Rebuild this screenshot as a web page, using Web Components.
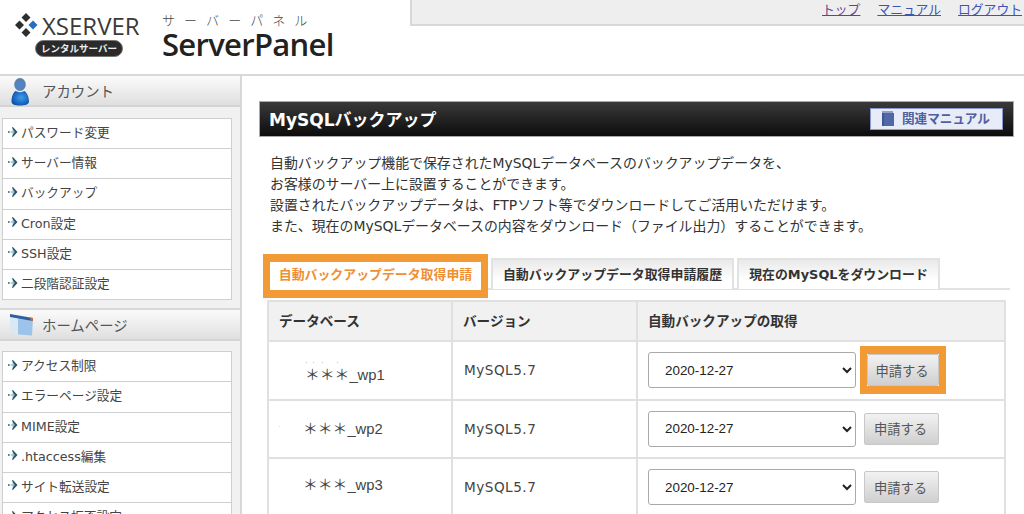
<!DOCTYPE html>
<html lang="ja">
<head>
<meta charset="utf-8">
<title>MySQLバックアップ</title>
<style>
  html, body { margin: 0; height: 514px; overflow: hidden; background: #fff; }
  body { font: 13.6px "DejaVu Sans", "Noto Sans CJK JP", sans-serif; color: #333; }
  .page { display: flex; align-items: stretch; height: 438px; }
</style>
</head>
<body>
<xs-header></xs-header>
<div class="page">
  <xs-sidebar>
    <xs-menu title="アカウント" icon="user" items="パスワード変更|サーバー情報|バックアップ|Cron設定|SSH設定|二段階認証設定"></xs-menu>
    <xs-menu title="ホームページ" icon="window" items="アクセス制限|エラーページ設定|MIME設定|.htaccess編集|サイト転送設定|アクセス拒否設定"></xs-menu>
  </xs-sidebar>
  <xs-main>
    <xs-title-bar>MySQLバックアップ</xs-title-bar>
    <xs-intro>
      自動バックアップ機能で保存されたMySQLデータベースのバックアップデータを、<br>
      お客様のサーバー上に設置することができます。<br>
      設置されたバックアップデータは、FTPソフト等でダウンロードしてご活用いただけます。<br>
      また、現在のMySQLデータベースの内容をダウンロード（ファイル出力）することができます。
    </xs-intro>
    <xs-tabs></xs-tabs>
    <xs-backup-table></xs-backup-table>
  </xs-main>
</div>

<script>
class XsHeader extends HTMLElement {
  constructor() {
    super();
    this.attachShadow({ mode: "open" });
  }
  connectedCallback() {
    this.shadowRoot.innerHTML = `
      <style>
        :host { display: flex; height: 76px; box-sizing: border-box; border-bottom: 2px solid #d8d8d8; }
        .logo { width: 153px; padding: 12px 0 0 15px; box-sizing: border-box; flex: none; display: flex; flex-direction: column; }
        .brand { display: flex; align-items: center; height: 26px; }
        .brand svg { flex: none; margin-right: 4px; }
        .brand span { font: 400 24px "Open Sans", sans-serif; color: #3a3a3a; white-space: nowrap; }
        .pill { align-self: flex-start; margin: 2px 0 0 20px; width: 88px; height: 17px; border-radius: 9px; background: #2b2b2b; border: 1px solid #777; box-sizing: border-box;
          color: #eee; font: 700 9.5px/15px "Noto Sans CJK JP", sans-serif; text-align: center; white-space: nowrap; }
        .panel { width: 257px; flex: none; padding: 12px 0 0 9px; box-sizing: border-box; color: #222; }
        .panel small { display: block; font: 300 13px/16px "Noto Sans CJK JP", sans-serif; letter-spacing: 9.1px; color: #444; white-space: nowrap; }
        .panel b { display: block; font: 600 31px/30px "Open Sans", sans-serif; letter-spacing: -.7px; margin-top: 1px; white-space: nowrap; }
        .top { flex: 1; height: 26px; box-sizing: border-box; background: #eee; border-left: 2px solid #d8d8d8; border-bottom: 2px solid #d8d8d8;
          display: flex; justify-content: flex-end; gap: 17px; padding-right: 2px; font: 12.8px/18px "Noto Sans CJK JP", sans-serif; }
        a { color: #3b55b5; text-decoration: underline; }
        a.seen { color: #6a3f90; }
      </style>
      <div class="logo">
        <div class="brand">
          <svg width="23" height="26" viewBox="0 0 23 26">
            <path fill="#2e2e2e" d="M11 1l4.500 4.500L11 10 6.500 5.500zM4.500 8.500L9 13l-4.500 4.500L0 13zM11 16l4.500 4.500L11 25l-4.500-4.500z"/>
            <path fill="#2a6cc0" d="M18 8.500l4.500 4.500-4.500 4.500-4.500-4.500z"/>
          </svg>
          <span>XSERVER</span>
        </div>
        <div class="pill">レンタルサーバー</div>
      </div>
      <div class="panel">
        <small>サーバーパネル</small>
        <b>ServerPanel</b>
      </div>
      <div class="top">
        <a class="seen" href="#">トップ</a><a href="#">マニュアル</a><a href="#">ログアウト</a>
      </div>`;
  }
}

class XsSidebar extends HTMLElement {
  constructor() {
    super();
    this.attachShadow({ mode: "open" });
    this.shadowRoot.innerHTML = `
      <style>
        :host { display: block; width: 242px; flex: none; box-sizing: border-box; background: #f1f1f1; border-right: 2px solid #d8d8d8; overflow: hidden; }
      </style>
      <slot></slot>`;
  }
}

const MENU_ICONS = {
  user: `<svg width="27" height="30" viewBox="0 0 27 30">
      <defs>
        <radialGradient id="uh" cx=".5" cy=".6" r=".6"><stop offset="0" stop-color="#4f86d0"/><stop offset="1" stop-color="#5d7da8"/></radialGradient>
        <radialGradient id="ub" cx=".55" cy=".45" r=".6"><stop offset="0" stop-color="#3d9df0"/><stop offset="1" stop-color="#0f4fa8"/></radialGradient>
      </defs>
      <ellipse cx="11" cy="8.500" rx="5.800" ry="6.500" fill="url(#uh)"/>
      <path fill="url(#ub)" d="M6.500 15c2.500 1.500 6.500 1.500 9 0 2.500 1.500 4.500 6 4.500 10.500 0 3-4 4-9 4s-8.500-1-8.500-4C2.500 21 4 16.500 6.500 15z"/>
    </svg>`,
  window: `<svg width="27" height="30" viewBox="0 0 27 30">
      <path fill="#dbe8f4" d="M1 5l8 1.500V24.500L1 23z"/>
      <path fill="#9cc4ea" d="M9 6.500L24 9l-1 16.500-14-1z"/>
      <path fill="#2f5f9e" d="M1 4l23 4-.2 3L1 7z"/>
      <path fill="#d9683a" d="M21.500 7.600L24 8l-.2 3-2.300-.4z"/>
    </svg>`
};

class XsMenu extends HTMLElement {
  constructor() {
    super();
    this.attachShadow({ mode: "open" });
  }
  connectedCallback() {
    const items = (this.getAttribute("items") || "").split("|");
    const icon = MENU_ICONS[this.getAttribute("icon")] || "";
    this.shadowRoot.innerHTML = `
      <style>
        :host { display: block; border-bottom: 2px solid #d8d8d8; background: #f1f1f1; }
        :host(:last-child) { border-bottom: 0; }
        .head { height: 31px; box-sizing: border-box; display: flex; align-items: center; padding-left: 9px; gap: 6px;
          background: linear-gradient(#fbfbfb, #dfdfdf); border-bottom: 2px solid #d4d4d4; }
        .head .ic { width: 27px; height: 30px; display: flex; flex: none; }
        .head .t { font: 400 14.400px "Noto Sans CJK JP", sans-serif; color: #555; }
        ul { list-style: none; margin: 10px 8px 8px 2px; padding: 0; background: #fff; border-top: 1px solid #cfcfcf; border-left: 1px solid #cfcfcf; border-right: 1px solid #cfcfcf; }
        :host(:first-child) ul { margin-top: 11px; }
        li { height: 30.200px; box-sizing: border-box; border-bottom: 1px solid #cfcfcf; display: flex; align-items: center; padding: 0 0 4px 5px; color: #444; font-size: 12.700px; white-space: nowrap; }
        li svg { flex: none; margin-right: 3px; }
      </style>
      <div class="head"><span class="ic">${icon}</span><span class="t">${this.getAttribute("title")}</span></div>
      <ul>${items.map(t => `<li>
        <svg width="10" height="10" viewBox="0 0 10 10"><path fill="#27566b" d="M0 4.200h1.600v1.600H0zM4 .5l.9-.4L9.500 5 4.900 9.900 4 9.500 6 5z"/><path fill="#8fb0bd" d="M2.600 4.200h2v1.600h-2zM4.500 2L7 5 4.500 8z" opacity=".8"/></svg>${t}</li>`).join("")}</ul>`;
  }
}

class XsMain extends HTMLElement {
  constructor() {
    super();
    this.attachShadow({ mode: "open" });
    this.shadowRoot.innerHTML = `
      <style>
        :host { display: block; flex: 1; padding: 25px 10px 0 17px; min-width: 0; }
      </style>
      <slot></slot>`;
  }
}

class XsTitleBar extends HTMLElement {
  constructor() {
    super();
    this.attachShadow({ mode: "open" });
    this.shadowRoot.innerHTML = `
      <style>
        :host { display: flex; align-items: center; justify-content: space-between; height: 36px; box-sizing: border-box;
          background: linear-gradient(#3a3a3a, #0c0c0c); border: 1px solid #aaa; padding: 0 10px 0 9px; }
        h1 { margin: 0 0 1px; font: 700 17px "DejaVu Sans", "Noto Sans CJK JP", sans-serif; color: #fff; }
        a { display: flex; align-items: center; gap: 7px; width: 133px; height: 22px; box-sizing: border-box; padding: 0 0 2px 10px; margin-bottom: 1px;
          background: #e8ecf8; border: 1px solid #8a9ad0; color: #4d60a0; text-decoration: none; font: 700 12.600px "Noto Sans CJK JP", sans-serif; }
        a svg { margin-top: 2px; }
      </style>
      <h1><slot></slot></h1>
      <a href="#"><svg width="14" height="15" viewBox="0 0 14 15"><path fill="#8f9fc8" d="M1 0h11v2H1z"/><path fill="#5068a8" d="M1 2h12v13H1z"/><path fill="#3f5594" d="M1 2h2v13H1z"/></svg>関連マニュアル</a>`;
  }
}

class XsIntro extends HTMLElement {
  constructor() {
    super();
    this.attachShadow({ mode: "open" });
    this.shadowRoot.innerHTML = `
      <style>
        :host { display: block; margin: 16px 0 0 11px; font-size: 13.920px; line-height: 21px; color: #333; white-space: nowrap; }
      </style>
      <slot></slot>`;
  }
}

class XsTabs extends HTMLElement {
  constructor() {
    super();
    this.attachShadow({ mode: "open" });
  }
  connectedCallback() {
    this.shadowRoot.innerHTML = `
      <style>
        :host { display: flex; align-items: flex-end; height: 44px; margin: 17px 0 0 4px; gap: 3px; box-sizing: border-box; position: relative; }
        :host::after { content: ""; position: absolute; left: 220px; right: 4px; bottom: 8px; height: 2px; background: #e2e2e2; }
        .tab { height: 31px; margin-bottom: 9px; padding-bottom: 2px; box-sizing: border-box; display: flex; align-items: center; justify-content: center;
          border: 2px solid #e2e2e2; border-bottom: 0; background: linear-gradient(#e9e9e9, #fff 70%);
          font: 700 12.900px "DejaVu Sans", "Noto Sans CJK JP", sans-serif; color: #333; white-space: nowrap; position: relative; z-index: 1; }
        .on { height: 44px; width: 225px; margin: 0; padding: 0 0 5px; border: 7px solid #f29a35; border-top-width: 8px; border-bottom: 8px solid #f29a35; background: #fff; color: #ef8f34; }
        .b { width: 243px; }
        .c { width: 203px; }
      </style>
      <div class="tab on">自動バックアップデータ取得申請</div>
      <div class="tab b">自動バックアップデータ取得申請履歴</div>
      <div class="tab c">現在のMySQLをダウンロード</div>`;
  }
}

class XsBackupTable extends HTMLElement {
  constructor() {
    super();
    this.attachShadow({ mode: "open" });
  }
  connectedCallback() {
    const rows = [
      { name: "＊＊＊_wp1", cls: "r1", mark: true },
      { name: "＊＊＊_wp2", cls: "r2" },
      { name: "＊＊＊_wp3", cls: "r3" }
    ];
    this.shadowRoot.innerHTML = `
      <style>
        :host { display: block; margin: 2px 0 0 8px; width: 737px; }
        table { border-collapse: collapse; width: 737px; table-layout: fixed; }
        th, td { border: 2px solid #e0e0e0; text-align: left; padding: 0 10px; }
        th { height: 35px; padding-bottom: 3px; background: #f1f1f1; font-weight: 700; font-size: 13.600px; color: #333; }
        td { height: 56.500px; font-size: 13.600px; color: #444; letter-spacing: .5px; }
        td:nth-child(2) { padding-left: 11px; }
        .db { font-family: "Liberation Sans", "Noto Sans CJK JP", sans-serif; font-size: 14.800px; letter-spacing: 0; padding-left: 34px; }
        .db.r1 { height: 50.500px; padding-top: 6px; padding-left: 36px;
          background: linear-gradient(#c4c4c4, #c4c4c4) 37px 20px / 1px 1px no-repeat, linear-gradient(#c4c4c4, #c4c4c4) 44px 20px / 1px 1px no-repeat,
            linear-gradient(#c4c4c4, #c4c4c4) 53px 20px / 1px 1px no-repeat, linear-gradient(#c4c4c4, #c4c4c4) 68px 20px / 1px 1px no-repeat; }
        .db.r2 { height: 54.500px; padding-bottom: 2px; background: linear-gradient(#ddd, #ddd) 10px 25px / 1px 1px no-repeat; }
        .db.r3 { height: 49.500px; padding-bottom: 7px; }
        .sel { display: flex; align-items: center; gap: 8px; }
        select { width: 208px; height: 36px; padding-left: 12px; border: 1px solid #aaa; border-radius: 3px; background-color: #fff; color: #222;
          font: 13.400px "Liberation Sans", sans-serif; box-sizing: border-box; flex: none; }
        button { width: 75px; height: 32px; border: 1px solid #c8c8c8; border-radius: 2px; background: linear-gradient(#f2f2f2, #cfcfcf); color: #555;
          font: 13.300px "Noto Sans CJK JP", sans-serif; padding: 0 2px 0 0; box-sizing: border-box; flex: none; }
        .mark { display: flex; border: 7px solid #f29a35; border-width: 8px 7px; margin-left: -4px; flex: none; }
        .mark button { width: 72px; }
      </style>
      <table>
        <colgroup><col style="width:184px"><col style="width:185px"><col style="width:368px"></colgroup>
        <tr><th>データベース</th><th>バージョン</th><th>自動バックアップの取得</th></tr>
        ${rows.map(r => `<tr>
          <td class="db ${r.cls}">${r.name}</td>
          <td>MySQL5.7</td>
          <td><div class="sel"><select><option>2020-12-27</option></select>${r.mark ? `<span class="mark"><button>申請する</button></span>` : `<button>申請する</button>`}</div></td>
        </tr>`).join("")}
      </table>`;
  }
}

customElements.define("xs-header", XsHeader);
customElements.define("xs-sidebar", XsSidebar);
customElements.define("xs-menu", XsMenu);
customElements.define("xs-main", XsMain);
customElements.define("xs-title-bar", XsTitleBar);
customElements.define("xs-intro", XsIntro);
customElements.define("xs-tabs", XsTabs);
customElements.define("xs-backup-table", XsBackupTable);
</script>
</body>
</html>
